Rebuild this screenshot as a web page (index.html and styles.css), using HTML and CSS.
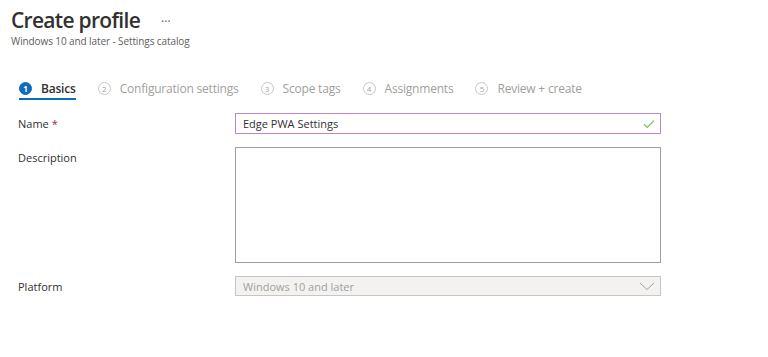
FILE: index.html
```html
<!DOCTYPE html>
<html>
<head>
<meta charset="utf-8">
<link rel="stylesheet" href="styles.css">
</head>
<body>
<div class="page">
  <header class="header">
    <div class="title-row">
      <h1 class="title">Create profile</h1>
      <span class="more">···</span>
    </div>
    <div class="subtitle">Windows 10 and later - Settings catalog</div>
  </header>
  <nav class="steps">
    <div class="step active"><span class="num">1</span><span class="label">Basics</span></div>
    <div class="step"><span class="num">2</span><span class="label">Configuration settings</span></div>
    <div class="step"><span class="num">3</span><span class="label">Scope tags</span></div>
    <div class="step"><span class="num">4</span><span class="label">Assignments</span></div>
    <div class="step"><span class="num">5</span><span class="label">Review + create</span></div>
  </nav>
  <form class="form">
    <label class="field-label">Name <span class="req">*</span></label>
    <div class="input name-input">
      <span>Edge PWA Settings</span>
      <svg class="check" width="12" height="10" viewBox="0 0 12 10"><path d="M1 5.2 L4.2 8.4 L11 1.6" fill="none" stroke="#7cb95b" stroke-width="1.2"/></svg>
    </div>
    <label class="field-label">Description</label>
    <div class="textarea"></div>
    <label class="field-label">Platform</label>
    <div class="input select">
      <span>Windows 10 and later</span>
      <svg class="chev" width="16" height="9" viewBox="0 0 16 9"><path d="M1 1 L8 7.5 L15 1" fill="none" stroke="#a19f9d" stroke-width="1"/></svg>
    </div>
  </form>
</div>
</body>
</html>
```
FILE: styles.css
```css
* { box-sizing: border-box; }
body {
  margin: 0;
  font-family: "Open Sans", "Noto Sans", sans-serif;
  color: #323130;
  background: #fff;
}
.header { padding: 7px 0 0 11px; }
.title-row { display: flex; align-items: center; height: 27px; }
.title {
  margin: 0;
  font-size: 21px;
  font-weight: 600;
  letter-spacing: -0.7px;
  color: #323130;
  line-height: 27px;
}
.more {
  margin-left: 21px;
  font-size: 12px;
  color: #605e5c;
  line-height: 12px;
  padding-top: 2px;
}
.subtitle {
  font-size: 10px;
  color: #605e5c;
  line-height: 13px;
  margin-top: 1px;
  letter-spacing: -0.1px;
}
.steps {
  display: flex;
  padding-left: 19px;
  margin-top: 29px;
  gap: 22px;
}
.step {
  display: flex;
  align-items: center;
  gap: 9px;
  height: 22px;
  font-size: 12px;
  color: #a19f9d;
  letter-spacing: -0.2px;
  position: relative;
}
.num {
  width: 13px;
  height: 13px;
  border-radius: 50%;
  border: 1px solid #c8c6c4;
  font-size: 8px;
  display: flex;
  align-items: center;
  justify-content: center;
  color: #a19f9d;
  letter-spacing: 0;
}
.step.active { color: #323130; font-weight: 600; }
.step.active .num {
  background: #0f6cbd;
  border-color: #0f6cbd;
  color: #fff;
  font-weight: 700;
}
.step.active::after {
  content: "";
  position: absolute;
  left: 0;
  right: 0;
  bottom: -1px;
  height: 2px;
  background: #0f6cbd;
}
.form {
  display: grid;
  grid-template-columns: 217px 426px;
  padding-left: 18px;
  margin-top: 14px;
  row-gap: 13px;
  align-items: start;
}
.field-label {
  font-size: 11px;
  line-height: 21px;
  color: #323130;
}
.req { color: #a4262c; }
.input {
  height: 21px;
  border: 1px solid #8a8886;
  display: flex;
  align-items: center;
  justify-content: space-between;
  padding: 0 4px 0 7px;
  font-size: 11px;
}
.name-input {
  border-color: #b68ad0;
  color: #323130;
}
.textarea {
  height: 116px;
  border: 1px solid #a19f9d;
}
.select {
  height: 20px;
  background: #f3f2f1;
  border-color: #c8c6c4;
  color: #a19f9d;
}
.check { margin-right: 1px; }
.chev { margin-right: 1px; }
```
